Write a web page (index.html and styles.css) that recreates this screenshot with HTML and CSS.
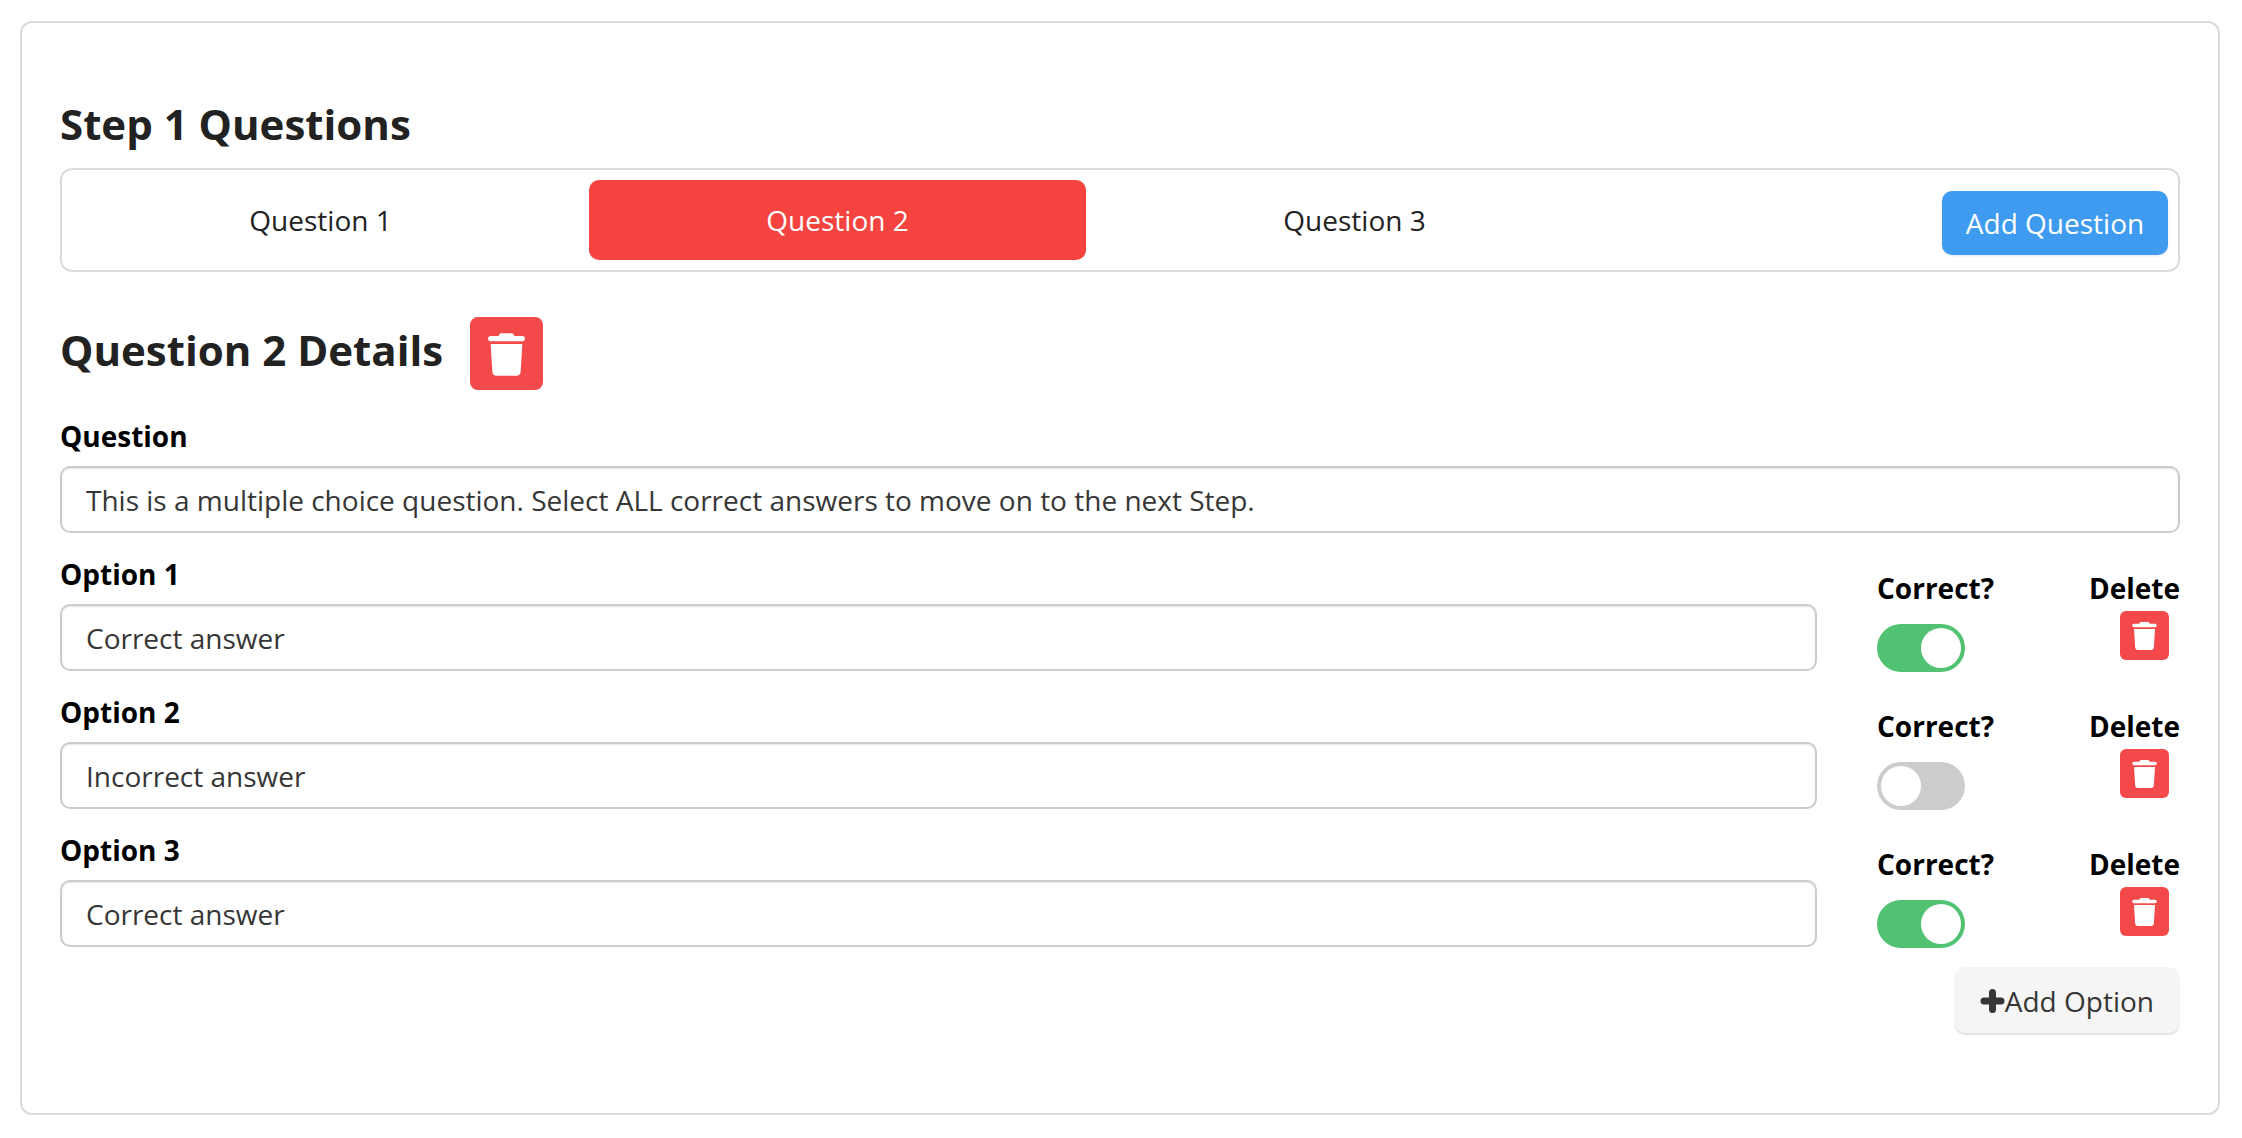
FILE: index.html
```html
<!DOCTYPE html>
<html lang="en">
<head>
    <meta charset="UTF-8">
    <meta name="viewport" content="width=device-width, initial-scale=1.0">
    <title>Step 1 Questions</title>
    <link rel="stylesheet" href="styles.css">
</head>
<body>
    <div class="card">
        <h1 class="title">Step 1 Questions</h1>

        <div class="tabs">
            <button class="tab">Question 1</button>
            <button class="tab active">Question 2</button>
            <button class="tab">Question 3</button>
            <button class="add-question">Add Question</button>
        </div>

        <div class="details-head">
            <h2 class="title details-title">Question 2 Details</h2>
            <button class="trash trash-big">
                <svg viewBox="0 0 448 512"><path d="M135.2 17.7L128 32H32C14.3 32 0 46.3 0 64S14.3 96 32 96H416c17.7 0 32-14.3 32-32s-14.3-32-32-32H320l-7.2-14.3C307.4 6.8 296.3 0 284.2 0H163.8c-12.1 0-23.2 6.8-28.6 17.7zM416 128H32L53.2 467c1.6 25.3 22.6 45 47.9 45H346.9c25.3 0 46.3-19.7 47.9-45L416 128z"/></svg>
            </button>
        </div>

        <label class="field-label question-label" for="question">Question</label>
        <input class="text-input" id="question" type="text" value="This is a multiple choice question. Select ALL correct answers to move on to the next Step.">

        <div class="option">
            <div class="option-field">
                <label class="field-label" for="option1">Option 1</label>
                <input class="text-input" id="option1" type="text" value="Correct answer">
            </div>
            <div class="option-correct">
                <div class="field-label">Correct?</div>
                <span class="toggle on"></span>
            </div>
            <div class="option-delete">
                <div class="field-label">Delete</div>
                <button class="trash">
                    <svg viewBox="0 0 448 512"><path d="M135.2 17.7L128 32H32C14.3 32 0 46.3 0 64S14.3 96 32 96H416c17.7 0 32-14.3 32-32s-14.3-32-32-32H320l-7.2-14.3C307.4 6.8 296.3 0 284.2 0H163.8c-12.1 0-23.2 6.8-28.6 17.7zM416 128H32L53.2 467c1.6 25.3 22.6 45 47.9 45H346.9c25.3 0 46.3-19.7 47.9-45L416 128z"/></svg>
                </button>
            </div>
        </div>

        <div class="option">
            <div class="option-field">
                <label class="field-label" for="option2">Option 2</label>
                <input class="text-input" id="option2" type="text" value="Incorrect answer">
            </div>
            <div class="option-correct">
                <div class="field-label">Correct?</div>
                <span class="toggle"></span>
            </div>
            <div class="option-delete">
                <div class="field-label">Delete</div>
                <button class="trash">
                    <svg viewBox="0 0 448 512"><path d="M135.2 17.7L128 32H32C14.3 32 0 46.3 0 64S14.3 96 32 96H416c17.7 0 32-14.3 32-32s-14.3-32-32-32H320l-7.2-14.3C307.4 6.8 296.3 0 284.2 0H163.8c-12.1 0-23.2 6.8-28.6 17.7zM416 128H32L53.2 467c1.6 25.3 22.6 45 47.9 45H346.9c25.3 0 46.3-19.7 47.9-45L416 128z"/></svg>
                </button>
            </div>
        </div>

        <div class="option">
            <div class="option-field">
                <label class="field-label" for="option3">Option 3</label>
                <input class="text-input" id="option3" type="text" value="Correct answer">
            </div>
            <div class="option-correct">
                <div class="field-label">Correct?</div>
                <span class="toggle on"></span>
            </div>
            <div class="option-delete">
                <div class="field-label">Delete</div>
                <button class="trash">
                    <svg viewBox="0 0 448 512"><path d="M135.2 17.7L128 32H32C14.3 32 0 46.3 0 64S14.3 96 32 96H416c17.7 0 32-14.3 32-32s-14.3-32-32-32H320l-7.2-14.3C307.4 6.8 296.3 0 284.2 0H163.8c-12.1 0-23.2 6.8-28.6 17.7zM416 128H32L53.2 467c1.6 25.3 22.6 45 47.9 45H346.9c25.3 0 46.3-19.7 47.9-45L416 128z"/></svg>
                </button>
            </div>
        </div>

        <div class="add-option-row">
            <button class="add-option">
                <svg viewBox="0 0 24 24"><path d="M12 0a3.5 3.5 0 0 1 3.5 3.5V8.5H20.5a3.5 3.5 0 0 1 0 7H15.5V20.5a3.5 3.5 0 0 1-7 0V15.5H3.5a3.5 3.5 0 0 1 0-7H8.5V3.5A3.5 3.5 0 0 1 12 0z"/></svg>Add Option
            </button>
        </div>
    </div>
</body>
</html>
```

FILE: styles.css
```css
* {
    box-sizing: border-box;
}
body {
    font-family: "Open Sans", Arial, sans-serif;
    background-color: #fff;
    margin: 0;
    padding: 21px 22px 0 20px;
    color: #222;
}
button {
    font-family: inherit;
    border: none;
    cursor: pointer;
}
.card {
    height: 1094px;
    padding: 73px 38px 0;
    border: 2px solid #dbdbdb;
    border-radius: 12px;
}
.title {
    margin: 0;
    font-size: 42px;
    line-height: 56px;
    font-weight: 700;
    color: #222;
}
.details-title {
    padding-bottom: 8px;
}
.tabs {
    display: flex;
    align-items: center;
    gap: 20px;
    height: 104px;
    margin-top: 16px;
    padding: 0 10px;
    border: 2px solid #dbdbdb;
    border-radius: 12px;
}
.tab {
    width: 497px;
    height: 80px;
    font-size: 28px;
    color: #222;
    background: none;
    border-radius: 10px;
}
.tab.active {
    background-color: #f5443f;
    color: #fff;
}
.add-question {
    width: 226px;
    height: 64px;
    margin-left: auto;
    margin-top: 6px;
    font-size: 28px;
    color: #fff;
    background-color: #3e9bf0;
    border-radius: 10px;
    box-shadow: 0 1px 3px rgba(0,0,0,0.1);
}
.details-head {
    display: flex;
    align-items: center;
    gap: 27px;
    margin-top: 45px;
}
.trash {
    display: flex;
    align-items: center;
    justify-content: center;
    width: 49px;
    height: 49px;
    padding: 0;
    background-color: #f4494b;
    border-radius: 6px;
}
.trash svg {
    width: 25px;
    height: 28px;
    fill: #fff;
}
.trash-big {
    width: 73px;
    height: 73px;
    border-radius: 8px;
}
.trash-big svg {
    width: 37px;
    height: 43px;
    margin-top: 2px;
}
.field-label {
    display: block;
    font-size: 28px;
    line-height: 38px;
    font-weight: 700;
    color: #000;
}
.question-label {
    margin-top: 27px;
    margin-bottom: 11px;
}
.text-input {
    display: block;
    width: 100%;
    height: 67px;
    padding: 0 24px;
    font-family: inherit;
    font-size: 28px;
    color: #363636;
    background: #fff;
    border: 2px solid #ccc;
    border-radius: 10px;
    box-shadow: inset 0 1px 2px rgba(10,10,10,0.1);
}
.option {
    display: flex;
    height: 116px;
    margin-top: 22px;
}
.option-field {
    flex: 1;
}
.option-field .field-label {
    margin-bottom: 11px;
}
.option-correct {
    width: 212px;
    margin-left: 60px;
    padding-top: 14px;
}
.toggle {
    display: flex;
    width: 88px;
    height: 48px;
    margin-top: 17px;
    padding: 4px;
    background-color: #ccc;
    border-radius: 24px;
}
.toggle::after {
    content: "";
    width: 40px;
    height: 40px;
    background-color: #fff;
    border-radius: 50%;
}
.toggle.on {
    justify-content: flex-end;
    background-color: #50c271;
}
.option-delete {
    width: 91px;
    padding-top: 14px;
}
.option-delete .trash {
    margin: 4px 0 0 31px;
}
.add-option-row {
    display: flex;
    justify-content: flex-end;
    margin-top: 20px;
    padding-right: 1px;
}
.add-option {
    display: flex;
    align-items: center;
    height: 66px;
    padding: 2px 25px 0;
    font-size: 28px;
    color: #363636;
    background-color: #f5f5f5;
    border-radius: 10px;
    box-shadow: 0 2px 2px rgba(0,0,0,0.12);
}
.add-option svg {
    width: 25px;
    height: 24px;
    fill: #363636;
}
```
